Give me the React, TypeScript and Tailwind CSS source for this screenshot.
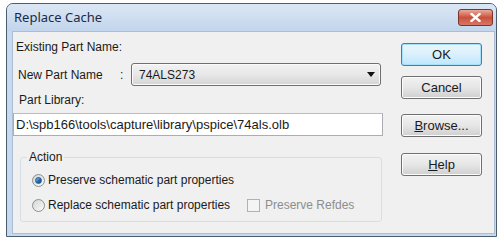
function Radio({ checked }: { checked?: boolean }) {
  return (
    <span className="w-[13px] h-[13px] rounded-full border border-[#8e8f8f] bg-gradient-to-br from-[#d2d4d6] to-[#fbfbfb] flex items-center justify-center shrink-0">
      {checked && (
        <span className="w-[7px] h-[7px] rounded-full bg-gradient-to-br from-[#93c9ef] via-[#2a6fb4] to-[#0c4c8f] border border-[#1d5a93]" />
      )}
    </span>
  );
}

function Btn({ children, focus }: { children: React.ReactNode; focus?: boolean }) {
  return (
    <button
      className={
        "w-[81px] h-[23px] rounded-[3px] border text-[13px] text-[#1a1a1a] flex items-center justify-center " +
        (focus
          ? "border-[#3c7fb1] bg-gradient-to-b from-[#eaf6fd] via-[#d9f0fc] to-[#bee6fd] shadow-[inset_0_0_0_1px_#a6e0fb]"
          : "border-[#707070] bg-gradient-to-b from-[#f2f2f2] via-[#e6e6e6] to-[#cfcfcf] shadow-[inset_0_0_0_1px_#fcfcfc]")
      }
    >
      {children}
    </button>
  );
}

export default function App() {
  return (
    <div className="w-[504px] h-[242px] bg-white pt-[3px] pl-[6px] font-['Liberation_Sans',Arial,sans-serif] text-[12px] text-[#1a1a1a]">
      <div className="w-[491px] h-[234px] flex flex-col rounded-t-[7px] border border-[#4b5d70] bg-[#c6d9ef] overflow-hidden">
        {/* title bar */}
        <div className="h-[27px] shrink-0 flex items-center justify-between pl-[7px] pr-[3px] bg-gradient-to-b from-[#dbe7f5] to-[#c2d5ec]">
          <span className="font-['Noto_Sans',sans-serif] text-[13px] text-[#1c2a44] leading-none">Replace Cache</span>
          <button className="w-[35px] h-[17px] rounded-[3px] border border-[#7b3428] bg-gradient-to-b from-[#e9a99b] via-[#c9503c] to-[#d77766] flex items-center justify-center">
            <svg width="11" height="9" viewBox="0 0 11 9">
              <path d="M1.5 1 L9.5 8 M9.5 1 L1.5 8" stroke="#fff" strokeWidth="2.4" strokeLinecap="square" />
            </svg>
          </button>
        </div>

        {/* client */}
        <div className="flex-1 ml-[5px] mr-[1px] mb-[2px] bg-[#f0f0f0] border border-[#aabdd3] flex">
          <div className="w-[370px] flex flex-col">
            <div className="mt-[8px] pl-[3px] leading-[14px]">Existing Part Name:</div>

            <div className="mt-[9px] flex items-center h-[23px]">
              <span className="pl-[5px] w-[107px]">New Part Name</span>
              <span className="w-[11px]">:</span>
              <div className="w-[250px] h-[23px] rounded-[3px] border border-[#707070] bg-gradient-to-b from-[#f2f2f2] via-[#e8e8e8] to-[#d4d4d4] shadow-[inset_0_0_0_1px_#fbfbfb] flex items-center justify-between pl-[7px] pr-[5px]">
                <span>74ALS273</span>
                <svg width="8" height="5" viewBox="0 0 8 5">
                  <path d="M0 0 H8 L4 5 Z" fill="#111" />
                </svg>
              </div>
            </div>

            <div className="mt-[7px] pl-[6px] leading-[14px]">Part Library:</div>

            <div className="mt-[6px] h-[23px] border border-[#abadb3] border-t-[#b9bcc2] bg-white flex items-center pl-[2px] overflow-hidden whitespace-nowrap text-[13px]">
              D:\spb166\tools\capture\library\pspice\74als.olb
            </div>

            <fieldset className="mt-[14px] ml-[7px] w-[362px] h-[72px] border border-[#d5dfe5] rounded-[3px] pl-[11px]">
              <legend className="ml-[-5px] px-[2px] leading-[14px]">Action</legend>
              <div className="mt-[9px] flex items-center gap-[3px] leading-[14px]">
                <Radio checked />
                <span>Preserve schematic part properties</span>
              </div>
              <div className="mt-[11px] flex items-center leading-[14px]">
                <div className="w-[215px] flex items-center gap-[3px]">
                  <Radio />
                  <span>Replace schematic part properties</span>
                </div>
                <span className="w-[13px] h-[13px] border border-[#b1b1b1] bg-[#f4f4f4]" />
                <span className="ml-[5px] text-[#8d8d8d]">Preserve Refdes</span>
              </div>
            </fieldset>
          </div>

          <div className="ml-[18px] flex flex-col">
            <div className="mt-[11px]">
              <Btn focus>OK</Btn>
            </div>
            <div className="mt-[10px]">
              <Btn>Cancel</Btn>
            </div>
            <div className="mt-[15px]">
              <Btn>
                <span><span className="underline">B</span>rowse...</span>
              </Btn>
            </div>
            <div className="mt-[16px]">
              <Btn>
                <span><span className="underline">H</span>elp</span>
              </Btn>
            </div>
          </div>
        </div>
      </div>
    </div>
  );
}
